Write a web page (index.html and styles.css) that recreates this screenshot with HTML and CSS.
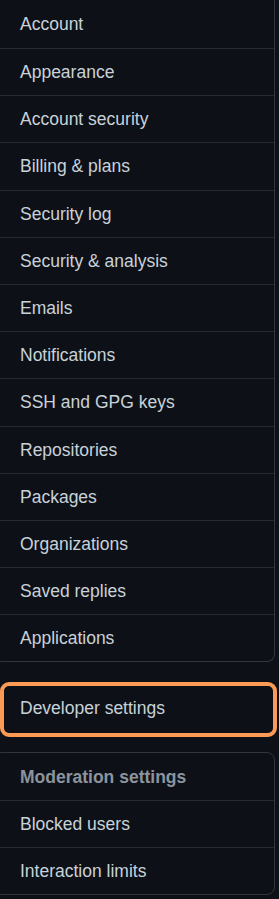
FILE: index.html
```html
<!DOCTYPE html>
<html lang="en">

<head>
  <meta charset="UTF-8">
  <meta name="viewport" content="width=device-width, initial-scale=1.0">
  <title>Settings menu</title>
  <link rel="stylesheet" href="styles.css">
</head>

<body>
  <!-- main settings list, top of the card is scrolled off -->
  <nav class="menu menu-top">
    <a class="menu-item" href="#">Account</a>
    <a class="menu-item" href="#">Appearance</a>
    <a class="menu-item" href="#">Account security</a>
    <a class="menu-item" href="#">Billing &amp; plans</a>
    <a class="menu-item" href="#">Security log</a>
    <a class="menu-item" href="#">Security &amp; analysis</a>
    <a class="menu-item" href="#">Emails</a>
    <a class="menu-item" href="#">Notifications</a>
    <a class="menu-item" href="#">SSH and GPG keys</a>
    <a class="menu-item" href="#">Repositories</a>
    <a class="menu-item" href="#">Packages</a>
    <a class="menu-item" href="#">Organizations</a>
    <a class="menu-item" href="#">Saved replies</a>
    <a class="menu-item" href="#">Applications</a>
  </nav>

  <!-- highlighted entry -->
  <nav class="menu-dev">
    <a class="menu-item" href="#">Developer settings</a>
  </nav>

  <nav class="menu">
    <h3 class="menu-heading">Moderation settings</h3>
    <a class="menu-item" href="#">Blocked users</a>
    <a class="menu-item" href="#">Interaction limits</a>
  </nav>
</body>

</html>
```

FILE: styles.css
```css
html,
body {
  margin: 0;
  background-color: #0d1117;
}

body {
  font-family: "Liberation Sans", Arial, sans-serif;
  font-size: 17.5px;
  color: #c9d1d9;
  overflow: hidden;
}

.menu {
  margin-left: -6px;
  width: 281px;
  box-sizing: border-box;
  border: 1px solid #30363d;
  border-radius: 8px;
  background-color: #0d1117;
}

/* the top edge of this card is cut off in the view */
.menu-top {
  border-top: 0;
  border-top-left-radius: 0;
  border-top-right-radius: 0;
}

.menu-item,
.menu-heading {
  display: flex;
  align-items: center;
  box-sizing: border-box;
  height: 47.2px;
  padding: 1px 20px 0 25px;
  border-top: 1px solid #262b33;
  color: #c9d1d9;
  text-decoration: none;
  margin: 0;
}

.menu-top .menu-item:first-child {
  height: 48px;
  border-top: 0;
}

.menu-heading {
  height: 46.5px;
  border-top: 0;
  font-size: 17.5px;
  font-weight: bold;
  color: #8b949e;
}

.menu-dev {
  margin-top: 20px;
  margin-bottom: 15px;
  width: 277px;
  box-sizing: border-box;
  border: 4px solid #fa9a55;
  border-radius: 9px;
  background-color: #0d1117;
}

.menu-dev .menu-item {
  height: 47px;
  border-top: 0;
  padding: 0 20px 3px 16px;
}
```
